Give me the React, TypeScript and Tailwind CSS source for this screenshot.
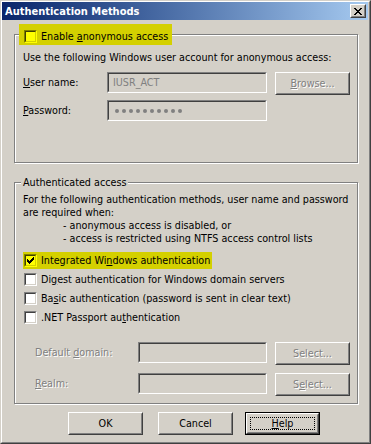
import React from "react";

const HL = "bg-[#d4d000]";

function CheckMark() {
  const px: [number, number][] = [
    [6, 0],
    [5, 1], [6, 1],
    [0, 2], [4, 2], [5, 2], [6, 2],
    [0, 3], [1, 3], [3, 3], [4, 3], [5, 3],
    [0, 4], [1, 4], [2, 4], [3, 4], [4, 4],
    [1, 5], [2, 5], [3, 5],
    [2, 6],
  ];
  return (
    <svg width="7" height="7" viewBox="0 0 7 7" shapeRendering="crispEdges">
      {px.map(([x, y], i) => (
        <rect key={i} x={x} y={y} width="1" height="1" fill="#000" />
      ))}
    </svg>
  );
}

function CloseX() {
  const px: [number, number][] = [
    [0, 0], [1, 0], [6, 0], [7, 0],
    [1, 1], [2, 1], [5, 1], [6, 1],
    [2, 2], [3, 2], [4, 2], [5, 2],
    [3, 3], [4, 3],
    [2, 4], [3, 4], [4, 4], [5, 4],
    [1, 5], [2, 5], [5, 5], [6, 5],
    [0, 6], [1, 6], [6, 6], [7, 6],
  ];
  return (
    <svg width="8" height="7" viewBox="0 0 8 7" shapeRendering="crispEdges">
      {px.map(([x, y], i) => (
        <rect key={i} x={x} y={y} width="1" height="1" fill="#000" />
      ))}
    </svg>
  );
}

function Checkbox({ checked = false, hl = false }: { checked?: boolean; hl?: boolean }) {
  return (
    <div
      className={
        "w-[13px] h-[13px] shrink-0 flex border " +
        (hl
          ? "border-t-[#808000] border-l-[#808000] border-r-[#ffff00] border-b-[#ffff00]"
          : "border-t-[#808080] border-l-[#808080] border-r-white border-b-white")
      }
    >
      <div
        className={
          "flex-1 flex items-center justify-center border " +
          (hl
            ? "border-t-[#404000] border-l-[#404000] border-r-[#d4d000] border-b-[#d4d000] bg-[#ffff00]"
            : "border-t-[#404040] border-l-[#404040] border-r-[#d4d0c8] border-b-[#d4d0c8] bg-white")
        }
      >
        {checked ? <CheckMark /> : null}
      </div>
    </div>
  );
}

function Sunken({ className, children }: { className: string; children?: React.ReactNode }) {
  return (
    <div
      className={
        "flex border border-t-[#808080] border-l-[#808080] border-r-white border-b-white " + className
      }
    >
      <div className="flex-1 flex items-center border border-t-[#404040] border-l-[#404040] border-r-[#d4d0c8] border-b-[#d4d0c8] bg-[#d4d0c8] pl-[4px]">
        {children}
      </div>
    </div>
  );
}

function Button({ children }: { children: React.ReactNode }) {
  return (
    <div className="w-[75px] h-[23px] shrink-0 flex border border-t-white border-l-white border-r-[#404040] border-b-[#404040]">
      <div className="flex-1 flex items-center justify-center border border-t-[#d4d0c8] border-l-[#d4d0c8] border-r-[#808080] border-b-[#808080]">
        {children}
      </div>
    </div>
  );
}

function DefaultButton({ children }: { children: React.ReactNode }) {
  return (
    <div className="w-[75px] h-[23px] shrink-0 flex border border-black">
      <div className="flex-1 flex border border-t-white border-l-white border-r-[#404040] border-b-[#404040]">
        <div className="flex-1 flex p-[2px] border border-t-[#d4d0c8] border-l-[#d4d0c8] border-r-[#808080] border-b-[#808080]">
          <div className="flex-1 flex items-center justify-center border border-dotted border-black">
            {children}
          </div>
        </div>
      </div>
    </div>
  );
}

const EMB = "text-[#808080] [text-shadow:1px_1px_0_#fff]";

export default function App() {
  return (
    <div className="w-[371px] h-[444px] bg-[#d4d0c8] font-['DejaVu_Sans_Condensed','DejaVu_Sans',sans-serif] [font-stretch:condensed] text-[10.7px] leading-[13px] text-black whitespace-nowrap border border-t-[#d4d0c8] border-l-[#d4d0c8] border-r-[#404040] border-b-[#404040] overflow-hidden select-none">
      <div className="h-full border border-t-white border-l-white border-r-[#808080] border-b-[#808080] pr-px">
        {/* Title bar */}
        <div className="h-[18px] bg-linear-to-r from-[#0a246a] to-[#a6caf0] flex items-center pl-[3px] pr-[2px]">
          <span className="text-white font-bold text-[11px]">Authentication Methods</span>
          <div className="ml-auto w-[16px] h-[14px] flex border border-t-white border-l-white border-r-[#404040] border-b-[#404040] bg-[#d4d0c8]">
            <div className="flex-1 flex items-center justify-center border border-t-[#d4d0c8] border-l-[#d4d0c8] border-r-[#808080] border-b-[#808080]">
              <CloseX />
            </div>
          </div>
        </div>

        {/* Group 1 */}
        <div className="relative mt-[14px] ml-[12px] w-[344px] h-[129px] border border-[#808080] shadow-[1px_1px_0_#fff,inset_1px_1px_0_#fff] pl-[8px] pt-[16px]">
          <div className={"absolute left-[4px] top-[-11px] h-[21px] w-[153px] pl-[5px] pt-[6px] " + HL}>
            <div className="flex items-center">
              <Checkbox hl />
              <span className="ml-[4px]">
                Enable <u>a</u>nonymous access
              </span>
            </div>
          </div>
          <div>Use the following Windows user account for anonymous access:</div>
          <div className="flex items-start mt-[8px]">
            <div className="w-[84px] h-[21px] flex items-center">
              <span>
                <u>U</u>ser name:
              </span>
            </div>
            <Sunken className="w-[160px] h-[21px]">
              <span className="text-[#808080]">IUSR_ACT</span>
            </Sunken>
            <div className="ml-[8px]">
              <Button>
                <span className={EMB}>
                  <u>B</u>rowse...
                </span>
              </Button>
            </div>
          </div>
          <div className="flex items-start mt-[5px]">
            <div className="w-[84px] h-[21px] flex items-center">
              <span>
                <u>P</u>assword:
              </span>
            </div>
            <Sunken className="w-[160px] h-[21px]">
              <div className="flex gap-[3px] pl-[2px]">
                {Array.from({ length: 10 }).map((_, i) => (
                  <span key={i} className="w-[4px] h-[4px] rounded-full bg-[#808080]" />
                ))}
              </div>
            </Sunken>
          </div>
        </div>

        {/* Group 2 */}
        <div className="relative mt-[19px] ml-[12px] w-[344px] h-[222px] border border-[#808080] shadow-[1px_1px_0_#fff,inset_1px_1px_0_#fff] pl-[8px] pt-[10px]">
          <div className="absolute left-[6px] top-[-7px] px-[2px] bg-[#d4d0c8]">Authenticated access</div>
          <div>For the following authentication methods, user name and password</div>
          <div>are required when:</div>
          <div className="pl-[40px]">- anonymous access is disabled, or</div>
          <div className="pl-[40px]">- access is restricted using NTFS access control lists</div>

          <div className="mt-[6px]">
            <div className="h-[19px] flex items-center">
              <div className={"h-[17px] w-[189px] flex items-center pl-[1px] " + HL}>
                <Checkbox checked hl />
                <span className="ml-[4px]">
                  Integrated Wi<u>n</u>dows authentication
                </span>
              </div>
            </div>
            <div className="h-[19px] flex items-center pl-[1px]">
              <Checkbox />
              <span className="ml-[4px]">
                Di<u>g</u>est authentication for Windows domain servers
              </span>
            </div>
            <div className="h-[19px] flex items-center pl-[1px]">
              <Checkbox />
              <span className="ml-[4px]">
                Ba<u>s</u>ic authentication (password is sent in clear text)
              </span>
            </div>
            <div className="h-[19px] flex items-center pl-[1px]">
              <Checkbox />
              <span className="ml-[4px]">
                .NET Passport au<u>t</u>hentication
              </span>
            </div>
          </div>

          <div className="flex items-start mt-[15px]">
            <div className="w-[115px] h-[21px] pl-[12px] flex items-center">
              <span className={EMB}>
                Default <u>d</u>omain:
              </span>
            </div>
            <Sunken className="w-[129px] h-[21px]" />
            <div className="ml-[8px]">
              <Button>
                <span className={EMB}>Select...</span>
              </Button>
            </div>
          </div>
          <div className="flex items-start mt-[8px]">
            <div className="w-[115px] h-[21px] pl-[12px] flex items-center">
              <span className={EMB}>
                <u>R</u>ealm:
              </span>
            </div>
            <Sunken className="w-[129px] h-[21px]" />
            <div className="ml-[8px]">
              <Button>
                <span className={EMB}>
                  S<u>e</u>lect...
                </span>
              </Button>
            </div>
          </div>
        </div>

        {/* Buttons */}
        <div className="flex mt-[8px] pl-[66px]">
          <Button>OK</Button>
          <div className="ml-[15px]">
            <Button>Cancel</Button>
          </div>
          <div className="ml-[12px]">
            <DefaultButton>
              <span>
                <u>H</u>elp
              </span>
            </DefaultButton>
          </div>
        </div>
      </div>
    </div>
  );
}
